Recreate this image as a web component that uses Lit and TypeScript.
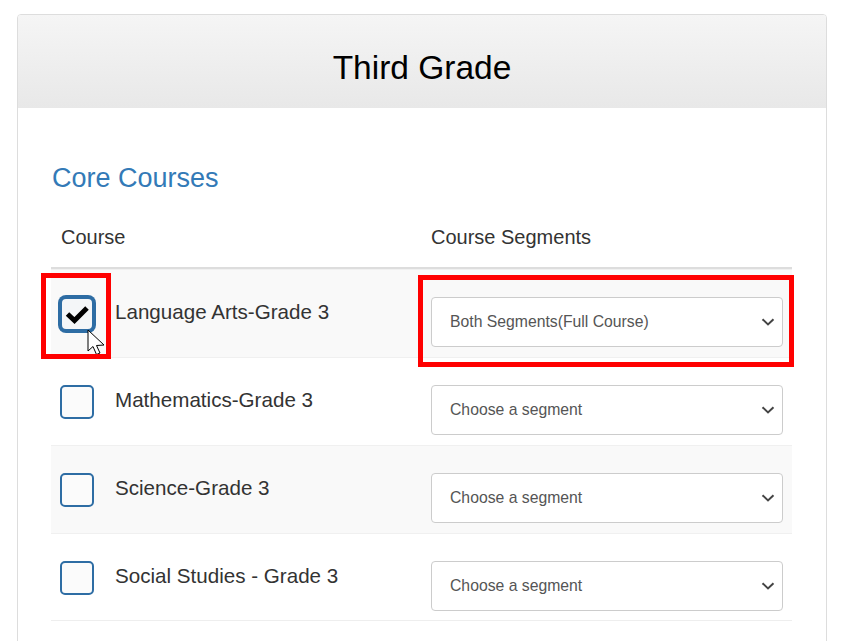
import { LitElement, html, css } from "lit";
import { customElement } from "lit/decorators.js";

const chevron = html`<svg class="chev" width="14" height="8" viewBox="0 0 14 8"><path d="M1.5 1.2 L7 6.4 L12.5 1.2" fill="none" stroke="#444" stroke-width="2"/></svg>`;

const rows = [
  { name: "Language Arts-Grade 3", seg: "Both Segments(Full Course)", checked: true },
  { name: "Mathematics-Grade 3", seg: "Choose a segment", checked: false },
  { name: "Science-Grade 3", seg: "Choose a segment", checked: false },
  { name: "Social Studies - Grade 3", seg: "Choose a segment", checked: false },
];

@customElement("app-root")
export class AppRoot extends LitElement {
  static styles = css`
    :host { display: block; height: 641px; overflow: hidden; background: #fff; font-family: "Liberation Sans", Arial, sans-serif; color: #333; position: relative; }
    .panel { margin: 14px 21px 0 17px; border: 1px solid #ddd; border-radius: 4px; height: 700px; box-sizing: border-box; }
    .head { height: 93px; box-sizing: border-box; padding-top: 12px; background: linear-gradient(#f5f5f5, #e8e8e8); border-radius: 3px 3px 0 0; display: flex; align-items: center; justify-content: center; font-size: 33.5px; color: #000; }
    .body { padding: 52px 34px 0 33px; }
    h2 { margin: 0; font-weight: 400; font-size: 27px; line-height: 36px; color: #337ab7; padding-left: 1px; }
    .thead { display: grid; grid-template-columns: 370px 1fr; margin-top: 15px; height: 53px; padding: 0 0 3px 10px; border-bottom: 2px solid #ddd; font-size: 20px; align-items: center; }
    .row { display: grid; grid-template-columns: 370px 1fr; height: 87px; border-top: 1px solid #f0f0f0; padding: 0 9px; }
    .row:first-of-type { border-top: 0; }
    .row.odd { background: #f9f9f9; }
    .row.last { height: 86px; border-bottom: 1px solid #eee; }
    .course { display: flex; gap: 21px; padding-top: 27px; align-items: flex-start; font-size: 20.6px; line-height: 30px; box-sizing: border-box; }
    .cb { width: 34px; height: 34px; box-sizing: border-box; border: 2px solid #2e6da4; border-radius: 5px; background: #fbfbfb; display: flex; align-items: center; justify-content: center; flex: none; }
    .cb.on { border-radius: 6px; background: #f4f6f8; box-shadow: 0 0 0 2px #2e6da4; }
    .cell { padding-top: 27px; padding-left: 1px; }
    .select { width: 352px; height: 50px; box-sizing: border-box; border: 1px solid #ccc; border-radius: 4px; background: #fff; display: flex; align-items: center; justify-content: space-between; padding: 0 7px 0 18px; font-size: 15.75px; color: #555; }
    .mark { position: absolute; border: 5px solid #f00; box-sizing: border-box; pointer-events: none; }
    .m1 { left: 41px; top: 273px; width: 70px; height: 86px; }
    .m2 { left: 418px; top: 275px; width: 376px; height: 92px; }
    .cursor { position: absolute; left: 87px; top: 329px; }
  `;

  render() {
    return html`
      <div class="panel">
        <div class="head">Third Grade</div>
        <div class="body">
          <h2>Core Courses</h2>
          <div class="thead"><span>Course</span><span>Course Segments</span></div>
          ${rows.map((r, i) => html`
            <div class="row ${i % 2 === 0 ? "odd" : ""} ${i === 3 ? "last" : ""}">
              <div class="course">
                <span class="cb ${r.checked ? "on" : ""}">
                  ${r.checked ? html`<svg width="24" height="20" viewBox="0 0 24 20"><path d="M2.5 10 L9.5 16.5 L22 4" fill="none" stroke="#000" stroke-width="5"/></svg>` : ""}
                </span>
                <span class="label">${r.name}</span>
              </div>
              <div class="cell"><div class="select"><span>${r.seg}</span>${chevron}</div></div>
            </div>`)}
        </div>
      </div>
      <svg class="cursor" width="20" height="27" viewBox="0 0 20 27"><path d="M1 1 L1 22 L6 17.5 L9.5 25.5 L13 24 L9.5 16.5 L17 16 Z" fill="#fff" stroke="#000" stroke-width="1"/></svg>
      <div class="mark m1"></div>
      <div class="mark m2"></div>
    `;
  }
}
